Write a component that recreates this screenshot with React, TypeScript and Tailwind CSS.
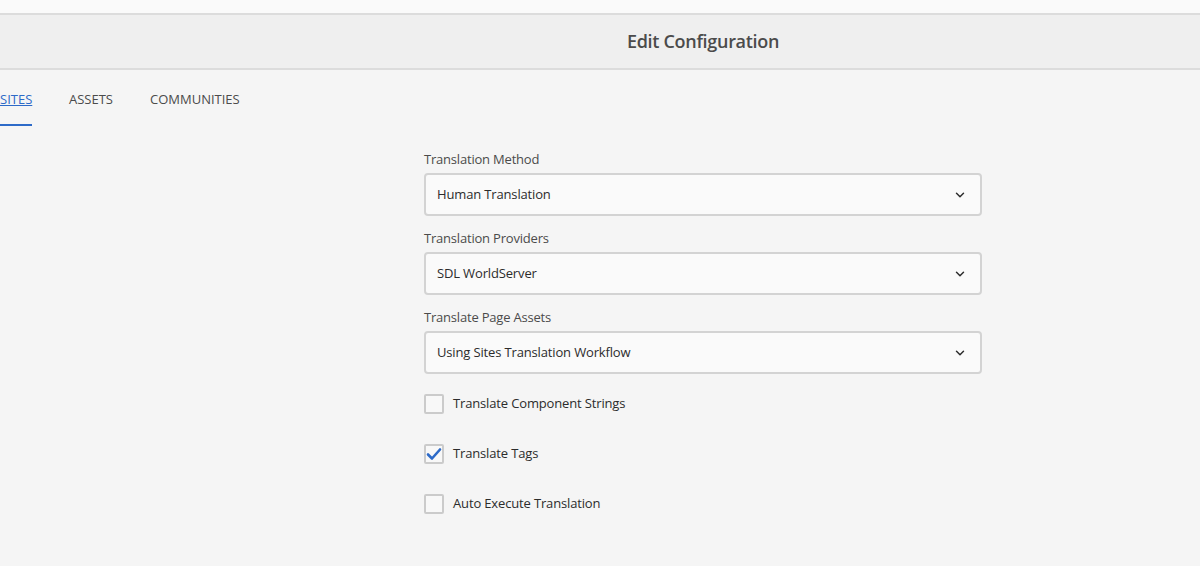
import { ChevronDown } from "lucide-react";

const font = { fontFamily: '"Open Sans", "Noto Sans", sans-serif' };

function Select({ label, value }: { label: string; value: string }) {
  return (
    <div className="mb-[14px]">
      <div className="text-[13px] leading-[16px] text-[#4b4b4b] mb-[6px] tracking-[-0.2px]">{label}</div>
      <div className="h-[43px] flex items-center justify-between rounded-[4px] border-2 border-[#d3d3d3] bg-[#fafafa] pl-[11px] pr-[13px]">
        <span className="text-[13px] text-[#2c2c2c] tracking-[-0.15px]">{value}</span>
        <ChevronDown className="w-[14px] h-[14px] text-[#2c2c2c]" strokeWidth={2.5} />
      </div>
    </div>
  );
}

function Check({ label, checked }: { label: string; checked?: boolean }) {
  return (
    <div className="flex items-center h-[20px] mb-[30px]">
      <div className="w-[20px] h-[20px] border-2 border-[#cbcbcb] bg-[#f8f8f8] rounded-[2px] flex items-center justify-center">
        {checked && (
          <svg width="16" height="14" viewBox="0 0 16 14">
            <path d="M2 7.5 L6 11.5 L14 2.5" fill="none" stroke="#2d6ac8" strokeWidth="2.6" strokeLinecap="round" strokeLinejoin="round" />
          </svg>
        )}
      </div>
      <span className="ml-[9px] text-[13px] text-[#2c2c2c] tracking-[-0.15px]">{label}</span>
    </div>
  );
}

export default function App() {
  return (
    <div style={font} className="w-[1200px] h-[566px] overflow-hidden bg-[#f5f5f5]">
      <div className="h-[15px] bg-[#fafafa] border-b-2 border-[#dcdcdc]" />
      <div className="h-[55px] bg-[#efefef] border-b-2 border-[#dcdcdc] flex items-center justify-center pl-[206px]">
        <h1 className="text-[18px] font-semibold text-[#4b4b4b] tracking-[-0.3px]">Edit Configuration</h1>
      </div>
      <div className="flex items-end h-[56px] text-[13px] text-[#4b4b4b]">
        <div className="w-[33px] flex flex-col items-start">
          <span className="text-[#2d6ac8] underline leading-[16px]">SITES</span>
          <div className="mt-[17px] h-[2px] w-[32px] bg-[#2d6ac8]" />
        </div>
        <div className="ml-[36px] pb-[19px] leading-[16px]">ASSETS</div>
        <div className="ml-[37px] pb-[19px] leading-[16px]">COMMUNITIES</div>
      </div>
      <div className="ml-[424px] w-[558px] mt-[25px]">
        <Select label="Translation Method" value="Human Translation" />
        <Select label="Translation Providers" value="SDL WorldServer" />
        <Select label="Translate Page Assets" value="Using Sites Translation Workflow" />
        <div className="pt-[6px]">
          <Check label="Translate Component Strings" />
          <Check label="Translate Tags" checked />
          <Check label="Auto Execute Translation" />
        </div>
      </div>
    </div>
  );
}
